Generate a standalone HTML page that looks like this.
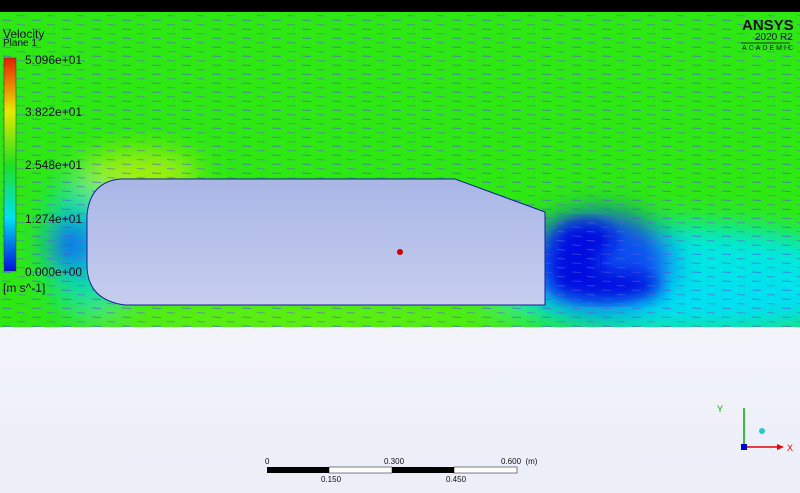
<!DOCTYPE html>
<html><head><style>
html,body{margin:0;padding:0;width:800px;height:493px;overflow:hidden;background:#f4f5fb;font-family:"Liberation Sans",sans-serif}
.t{position:absolute;font-size:12px;color:#111}
</style></head><body>
<div style="position:absolute;left:0;top:0;width:800px;height:493px;background:linear-gradient(#ffffff,#eceef8)"></div>
<svg width="800" height="493" style="position:absolute;left:0;top:0">
<defs>
<filter id="b"><feGaussianBlur stdDeviation="14"/></filter>
<filter id="b2"><feGaussianBlur stdDeviation="8"/></filter>
<clipPath id="c"><rect x="0" y="12" width="800" height="315"/></clipPath>
<pattern id="p" width="30" height="9" patternUnits="userSpaceOnUse">
<line x1="2" y1="2" x2="11" y2="2.5" stroke="#5050e0" stroke-width="1"/>
<line x1="17" y1="6.5" x2="25" y2="7" stroke="#6060d8" stroke-width="1"/>
</pattern>
<linearGradient id="lg" x1="0" y1="1" x2="0" y2="0">
<stop offset="0" stop-color="#0010e0"/><stop offset=".25" stop-color="#00e0f0"/><stop offset=".5" stop-color="#20e020"/><stop offset=".75" stop-color="#e8e800"/><stop offset="1" stop-color="#e82000"/>
</linearGradient>
<linearGradient id="bd" x1="0" y1="0" x2="0" y2="1"><stop offset="0" stop-color="#a9b6e6"/><stop offset="1" stop-color="#c6cdee"/></linearGradient>
</defs>
<rect x="0" y="0" width="800" height="12" fill="#000"/>
<g clip-path="url(#c)">
<rect x="0" y="12" width="800" height="315" fill="#2ee814"/>
<g filter="url(#b)">
<ellipse cx="90" cy="245" rx="45" ry="75" fill="#10e0a0"/>
<ellipse cx="72" cy="245" rx="22" ry="28" fill="#1060f0"/>
<ellipse cx="140" cy="175" rx="60" ry="25" fill="#a0f010"/>
<ellipse cx="300" cy="318" rx="220" ry="14" fill="#70f010"/>
<ellipse cx="680" cy="280" rx="190" ry="55" fill="#00e8e0"/>
<ellipse cx="700" cy="305" rx="160" ry="30" fill="#00e0f0"/>
<ellipse cx="600" cy="262" rx="75" ry="50" fill="#1050f0"/>
</g>
<g filter="url(#b2)"><ellipse cx="605" cy="285" rx="55" ry="14" fill="#0010e0"/><ellipse cx="585" cy="240" rx="30" ry="18" fill="#0010e0"/><ellipse cx="575" cy="265" rx="25" ry="30" fill="#0010e0"/></g>
<rect x="0" y="12" width="800" height="315" fill="url(#p)" opacity=".6"/>
</g>
<path d="M120,179 L455,179 L545,212 L545,305 L125,305 Q87,300 87,265 L87,215 Q90,182 120,179 Z" fill="url(#bd)" stroke="#1020a0" stroke-width="1"/>
<circle cx="400" cy="252" r="3" fill="#c00"/>
<rect x="4" y="58" width="12" height="213" fill="url(#lg)" stroke="#333" stroke-width=".5"/>
<rect x="267" y="467" width="62" height="6" fill="#000"/><rect x="329" y="467" width="63" height="6" fill="#fff" stroke="#000" stroke-width=".5"/>
<rect x="392" y="467" width="62" height="6" fill="#000"/><rect x="454" y="467" width="63" height="6" fill="#fff" stroke="#000" stroke-width=".5"/>
<line x1="744" y1="447" x2="744" y2="408" stroke="#0a0" stroke-width="1.5"/>
<line x1="744" y1="447" x2="777" y2="447" stroke="#e00" stroke-width="1.5"/>
<polygon points="777,444 784,447 777,450" fill="#e00"/>
<rect x="741" y="444" width="6" height="6" fill="#00c"/>
<circle cx="762" cy="431" r="3" fill="#2cc"/>
<text x="717" y="412" font-size="9" fill="#0a0" font-family="Liberation Sans">Y</text>
<text x="787" y="451" font-size="9" fill="#e00" font-family="Liberation Sans">X</text>
<line x1="741" y1="43" x2="790" y2="43" stroke="#111" stroke-width=".7"/>
</svg>
<div class="t" style="left:3px;top:27px;font-size:12px">Velocity</div>
<div class="t" style="left:3px;top:38px;font-size:10px">Plane 1</div>
<div class="t" style="left:25px;top:53px">5.096e+01</div>
<div class="t" style="left:25px;top:105px">3.822e+01</div>
<div class="t" style="left:25px;top:158px">2.548e+01</div>
<div class="t" style="left:25px;top:212px">1.274e+01</div>
<div class="t" style="left:25px;top:265px">0.000e+00</div>
<div class="t" style="left:3px;top:281px">[m s^-1]</div>
<div class="t" style="left:742px;top:17px;font-size:15px;font-weight:bold">ANSYS</div>
<div class="t" style="left:755px;top:32px;font-size:10px">2020 R2</div>
<div class="t" style="left:742px;top:45px;font-size:7px;letter-spacing:2px">ACADEMIC</div>
<div class="t" style="left:265px;top:457px;font-size:8px">0</div>
<div class="t" style="left:384px;top:457px;font-size:8px">0.300</div>
<div class="t" style="left:501px;top:457px;font-size:8px">0.600 &nbsp;(m)</div>
<div class="t" style="left:321px;top:475px;font-size:8px">0.150</div>
<div class="t" style="left:446px;top:475px;font-size:8px">0.450</div>
</body></html>
